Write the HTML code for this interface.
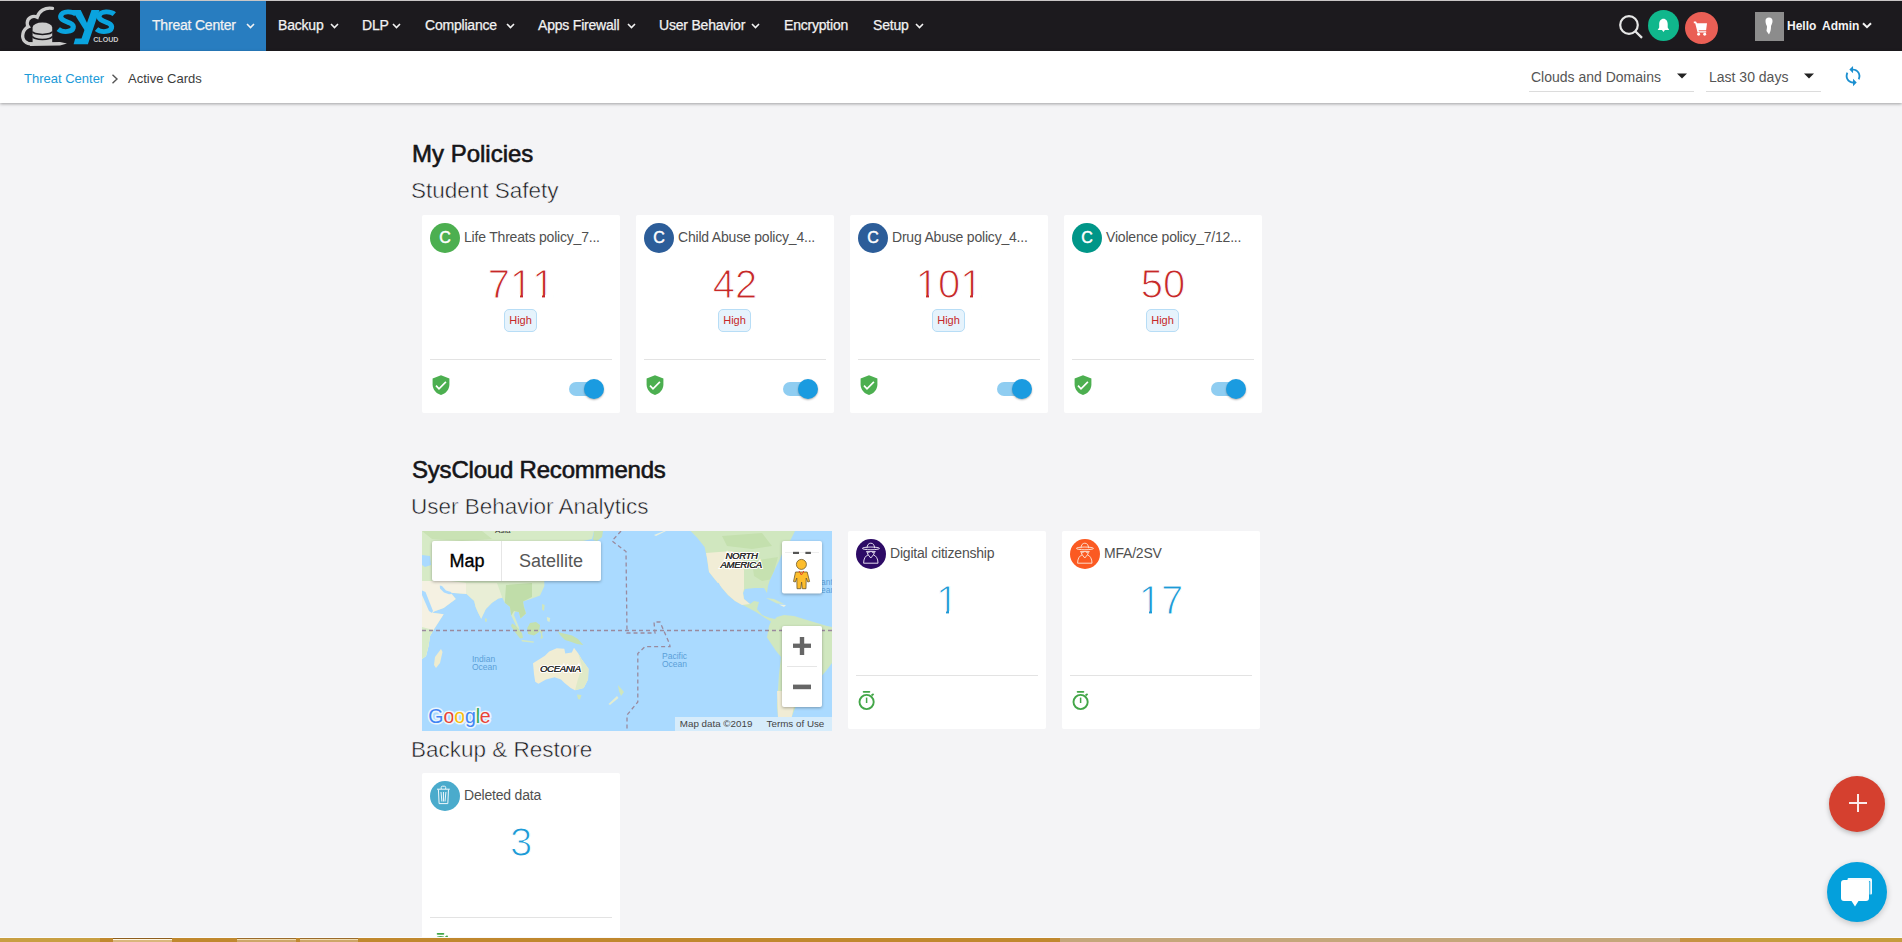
<!DOCTYPE html>
<html><head><meta charset="utf-8">
<style>
*{margin:0;padding:0;box-sizing:border-box}
html,body{width:1902px;height:942px;overflow:hidden;background:#f4f4f6;font-family:"Liberation Sans",sans-serif;position:relative}
.a{position:absolute;white-space:nowrap}
#topline{left:0;top:0;width:1902px;height:1px;background:#c9c6c6}
#nav{left:0;top:1px;width:1902px;height:50px;background:#1c1a1e}
#act{left:140px;top:1px;width:126px;height:50px;background:#287dc0}
.ni{font-size:14px;line-height:14px;color:#f2f2f2;top:18px;-webkit-text-stroke:0.25px #f2f2f2;letter-spacing:-0.2px}
.chev{position:absolute;top:23px}
#crumb{left:0;top:51px;width:1902px;height:52px;background:#fff;box-shadow:0 1px 3px rgba(0,0,0,.35)}
.bc{font-size:13px;line-height:13px;top:72px}
.dd{font-size:14px;line-height:14px;top:70px;color:#555}
.uline{height:1px;background:#dcdcdc;top:91px}
.h1{font-size:24px;line-height:24px;color:#151518;-webkit-text-stroke:0.6px #151518}
.h2{font-size:22.5px;line-height:22.5px;color:#18181c;-webkit-text-stroke:0.5px #f4f4f6}
.card{position:absolute;width:198px;height:198px;background:#fff;border-radius:2px}
.card .ic{position:absolute;left:8px;top:8px;width:30px;height:30px;border-radius:50%;color:#fff;font-size:16px;line-height:30px;text-align:center;-webkit-text-stroke:0.45px #fff}
.card .tt{position:absolute;left:42px;top:15px;font-size:14px;line-height:14px;color:#505050;white-space:nowrap;letter-spacing:-0.2px}
.card .num{position:absolute;left:0;width:198px;text-align:center;top:49px;font-size:40px;line-height:40px}
.card .red{color:#c62828;-webkit-text-stroke:1.1px #fff}
.card .blue{color:#1d9ad6;-webkit-text-stroke:1.1px #fff}
.card .badge{position:absolute;left:82px;top:94px;width:33px;height:22.5px;border:1px solid #b7ddf6;background:#e6f3fc;border-radius:5px;color:#c62828;font-size:11px;line-height:20px;text-align:center}
.card .div{position:absolute;left:8px;top:144px;width:182px;height:1px;background:#e3e3e3}
.card .sh{position:absolute;left:9.5px;top:160px}
.card .tg{position:absolute;left:147px;top:167px;width:33px;height:14px;border-radius:7px;background:#8fcdf1}
.card .th{position:absolute;left:162px;top:164px;width:20px;height:20px;border-radius:50%;background:#1a9be0;box-shadow:0 1px 2px rgba(0,0,0,.3)}
.card .tm{position:absolute;left:9px;top:159px}
.one{position:relative;display:inline-block}
.one::before,.one::after{content:"";position:absolute;top:31px;height:3px;width:8px;background:#fff}
.one::before{left:2px}.one::after{left:13px}
</style></head><body>
<div class="a" id="topline"></div>
<div class="a" id="nav"></div>
<div class="a" id="act"></div>

<!-- logo -->
<svg class="a" style="left:0;top:0" width="130" height="51" viewBox="0 0 130 51">
  <path d="M52.5 8.4 C45 7.2 39 10.8 37.2 17.2 C33 15.2 27.5 17.5 27.2 22.8 C27.1 24.5 27.6 25.8 28.4 26.8 C22.5 29.5 21 37.5 24.8 41.3 C26.5 43 29.5 44 33 44" fill="none" stroke="#cbcbcb" stroke-width="3.3" stroke-linecap="round"/>
  <path d="M30 42.4 L60 42 L67 43.4 L60 45.6 L30 46Z" fill="#cbcbcb"/>
  <path d="M32.6 27.4 A9.8 4.8 0 0 1 52.2 27.4 L52.2 43.5 L32.6 43.5Z" fill="#cbcbcb"/>
  <path d="M32.6 31.6 A9.8 2.8 0 0 0 52.2 31.6" fill="none" stroke="#1c1a1e" stroke-width="1.5"/>
  <path d="M32.6 36.2 A9.8 3.3 0 0 0 52.2 36.2" fill="none" stroke="#1c1a1e" stroke-width="1.5"/>
  <g fill="none" stroke="#0aa3de" stroke-width="5.1" stroke-linecap="butt" transform="matrix(1,0,0,0.94,0,1.3)">
    <path d="M76 13.6 C72.5 10.6 62.5 9.8 60.8 15.3 C59.6 19.8 66.5 21.3 70.2 23.3 C75 25.8 74.3 31.2 67.5 32.1 C63.5 32.6 60.5 31.6 58.2 29.6"/>
    <path d="M114.3 13.6 C110.8 10.6 100.8 9.8 99.1 15.3 C97.9 19.8 104.8 21.3 108.5 23.3 C113.3 25.8 112.6 31.2 105.8 32.1 C101.8 32.6 98.8 31.6 96.5 29.6"/>
  </g>
  <path d="M71.8 10 L80.7 10 L87.8 24.5 L84.8 30.5Z" fill="#0aa3de"/>
  <path d="M91.5 10 L99.5 10 L87.9 44.3 L73.6 44.3 L75.2 38.5 L81.5 38.5Z" fill="#0aa3de"/>
  <text x="93.2" y="42.2" font-family="Liberation Sans" font-weight="bold" font-size="7.1" fill="#c8c8c8">CLOUD</text>
</svg>

<div class="a ni" style="left:152px">Threat Center</div>
<div class="a ni" style="left:278px">Backup</div>
<div class="a ni" style="left:362px">DLP</div>
<div class="a ni" style="left:425px">Compliance</div>
<div class="a ni" style="left:538px">Apps Firewall</div>
<div class="a ni" style="left:659px">User Behavior</div>
<div class="a ni" style="left:784px">Encryption</div>
<div class="a ni" style="left:873px">Setup</div>
<svg class="chev" style="left:246px" width="9" height="6" viewBox="0 0 9 6"><path d="M1 1 L4.5 4.5 L8 1" fill="none" stroke="#f2f2f2" stroke-width="1.6"/></svg>
<svg class="chev" style="left:330px" width="9" height="6" viewBox="0 0 9 6"><path d="M1 1 L4.5 4.5 L8 1" fill="none" stroke="#f2f2f2" stroke-width="1.6"/></svg>
<svg class="chev" style="left:392px" width="9" height="6" viewBox="0 0 9 6"><path d="M1 1 L4.5 4.5 L8 1" fill="none" stroke="#f2f2f2" stroke-width="1.6"/></svg>
<svg class="chev" style="left:506px" width="9" height="6" viewBox="0 0 9 6"><path d="M1 1 L4.5 4.5 L8 1" fill="none" stroke="#f2f2f2" stroke-width="1.6"/></svg>
<svg class="chev" style="left:627px" width="9" height="6" viewBox="0 0 9 6"><path d="M1 1 L4.5 4.5 L8 1" fill="none" stroke="#f2f2f2" stroke-width="1.6"/></svg>
<svg class="chev" style="left:751px" width="9" height="6" viewBox="0 0 9 6"><path d="M1 1 L4.5 4.5 L8 1" fill="none" stroke="#f2f2f2" stroke-width="1.6"/></svg>
<svg class="chev" style="left:915px" width="9" height="6" viewBox="0 0 9 6"><path d="M1 1 L4.5 4.5 L8 1" fill="none" stroke="#f2f2f2" stroke-width="1.6"/></svg>

<!-- right nav -->
<svg class="a" style="left:1616px;top:12px" width="30" height="30" viewBox="0 0 30 30">
  <circle cx="13" cy="13" r="8.8" fill="none" stroke="#e6e6e6" stroke-width="2.2"/>
  <path d="M19.5 19.5 L26 25.8" stroke="#e6e6e6" stroke-width="2.4"/>
</svg>
<div class="a" style="left:1648px;top:10px;width:31px;height:31px;border-radius:50%;background:#10b78c"></div>
<svg class="a" style="left:1656px;top:18px" width="15" height="16" viewBox="0 0 15 16">
  <path d="M7.45 0.8 C4.9 0.8 3.2 3.2 3.2 6 L3.2 9.6 L1.7 11.9 L13.2 11.9 L11.7 9.6 L11.7 6 C11.7 3.2 10 0.8 7.45 0.8Z M5.6 11.6 L7.45 13.9 L9.3 11.6Z" fill="#fff"/>
</svg>
<div class="a" style="left:1685px;top:12px;width:33px;height:32px;border-radius:50%;background:#ea5f55"></div>
<svg class="a" style="left:1693px;top:21px" width="16" height="16" viewBox="0 0 16 16">
  <path d="M0.8 0.6 L3 0.6 L4 2.3 L14 2.3 L13.1 9.3 L5.6 9.3 L5.9 10.2 L13.2 10.2 L13.2 11.6 L4.6 11.6 L2.2 2.2 L0.8 2.2Z" fill="#fff"/>
  <circle cx="5.6" cy="13.2" r="1.45" fill="#fff"/><circle cx="11.7" cy="13.2" r="1.45" fill="#fff"/>
</svg>
<div class="a" style="left:1755px;top:12px;width:29px;height:29px;background:#8c8c8c"></div>
<svg class="a" style="left:1763px;top:17px" width="12" height="20" viewBox="0 0 12 20">
  <path d="M6 0.5 C3.5 0.5 2.5 2 2.5 4 C2.5 6.5 3.5 8 4 9.5 C4 11 3.5 13 3.5 14 L6 17.5 L7.5 14 C8 12 8 10 8 9 C9 7 9.5 5.5 9.5 4 C9.5 2 8.5 0.5 6 0.5Z" fill="#fff"/>
</svg>
<div class="a" style="left:1787px;top:20px;font-size:12px;line-height:12px;font-weight:bold;color:#f4f4f4">Hello</div><div class="a" style="left:1822px;top:20px;font-size:12px;line-height:12px;font-weight:bold;color:#f4f4f4">Admin</div>
<svg class="a" style="left:1862px;top:22px" width="10" height="7" viewBox="0 0 10 7"><path d="M1 1.2 L5 5.2 L9 1.2" fill="none" stroke="#f4f4f4" stroke-width="2"/></svg>

<!-- breadcrumb bar -->
<div class="a" id="crumb"></div>
<div class="a bc" style="left:24px;color:#1a9ad8">Threat Center</div>
<svg class="a" style="left:111px;top:74px" width="8" height="10" viewBox="0 0 8 10"><path d="M1.5 0.8 L6 5 L1.5 9.2" fill="none" stroke="#555" stroke-width="1.4"/></svg>
<div class="a bc" style="left:128px;color:#3c3c3c">Active Cards</div>

<div class="a dd" style="left:1531px">Clouds and Domains</div>
<svg class="a" style="left:1677px;top:73px" width="10" height="6" viewBox="0 0 10 6"><path d="M0 0.5 L10 0.5 L5 5.5Z" fill="#222"/></svg>
<div class="a uline" style="left:1529px;width:165px"></div>
<div class="a dd" style="left:1709px">Last 30 days</div>
<svg class="a" style="left:1804px;top:73px" width="10" height="6" viewBox="0 0 10 6"><path d="M0 0.5 L10 0.5 L5 5.5Z" fill="#222"/></svg>
<div class="a uline" style="left:1706px;width:115px"></div>
<svg class="a" style="left:1841.6px;top:65px" width="22" height="22" viewBox="0 0 22 22">
  <g transform="scale(0.92)"><path d="M12 4V1L8 5l4 4V6c3.31 0 6 2.69 6 6 0 1.010-.25 1.97-.7 2.8l1.46 1.46C19.54 15.030 20 13.570 20 12c0-4.42-3.58-8-8-8zm0 14c-3.31 0-6-2.69-6-6 0-1.01.25-1.97.7-2.8L5.24 7.740C4.46 8.970 4 10.430 4 12c0 4.42 3.58 8 8 8v3l4-4-4-4v3z" fill="#1b8fd0"/></g>
</svg>

<!-- My Policies -->
<div class="a h1" style="left:412px;top:142px">My Policies</div>
<div class="a h2" style="left:411px;top:179.6px">Student Safety</div>

<div class="card" style="left:422px;top:215px">
  <div class="ic" style="background:#4caf50">C</div>
  <div class="tt">Life Threats policy_7...</div>
  <div class="num red">7<span class="one">1</span><span class="one">1</span></div>
  <div class="badge">High</div>
  <div class="div"></div>
  <svg class="sh" width="18" height="21" viewBox="0 0 18 21"><path d="M9 0.3 L17.4 3.6 L17.4 9.5 C17.4 14.5 13.8 18.6 9 20 C4.2 18.6 0.6 14.5 0.6 9.5 L0.6 3.6Z" fill="#4caf50"/><path d="M4 10.7 L7 13.8 L13.9 6.9" fill="none" stroke="#fff" stroke-width="1.7"/></svg>
  <div class="tg"></div><div class="th"></div>
</div>
<div class="card" style="left:636px;top:215px">
  <div class="ic" style="background:#2c5d99">C</div>
  <div class="tt">Child Abuse policy_4...</div>
  <div class="num red">42</div>
  <div class="badge">High</div>
  <div class="div"></div>
  <svg class="sh" width="18" height="21" viewBox="0 0 18 21"><path d="M9 0.3 L17.4 3.6 L17.4 9.5 C17.4 14.5 13.8 18.6 9 20 C4.2 18.6 0.6 14.5 0.6 9.5 L0.6 3.6Z" fill="#4caf50"/><path d="M4 10.7 L7 13.8 L13.9 6.9" fill="none" stroke="#fff" stroke-width="1.7"/></svg>
  <div class="tg"></div><div class="th"></div>
</div>
<div class="card" style="left:850px;top:215px">
  <div class="ic" style="background:#2c5d99">C</div>
  <div class="tt">Drug Abuse policy_4...</div>
  <div class="num red"><span class="one">1</span>0<span class="one">1</span></div>
  <div class="badge">High</div>
  <div class="div"></div>
  <svg class="sh" width="18" height="21" viewBox="0 0 18 21"><path d="M9 0.3 L17.4 3.6 L17.4 9.5 C17.4 14.5 13.8 18.6 9 20 C4.2 18.6 0.6 14.5 0.6 9.5 L0.6 3.6Z" fill="#4caf50"/><path d="M4 10.7 L7 13.8 L13.9 6.9" fill="none" stroke="#fff" stroke-width="1.7"/></svg>
  <div class="tg"></div><div class="th"></div>
</div>
<div class="card" style="left:1064px;top:215px">
  <div class="ic" style="background:#009688">C</div>
  <div class="tt">Violence policy_7/12...</div>
  <div class="num red">50</div>
  <div class="badge">High</div>
  <div class="div"></div>
  <svg class="sh" width="18" height="21" viewBox="0 0 18 21"><path d="M9 0.3 L17.4 3.6 L17.4 9.5 C17.4 14.5 13.8 18.6 9 20 C4.2 18.6 0.6 14.5 0.6 9.5 L0.6 3.6Z" fill="#4caf50"/><path d="M4 10.7 L7 13.8 L13.9 6.9" fill="none" stroke="#fff" stroke-width="1.7"/></svg>
  <div class="tg"></div><div class="th"></div>
</div>

<!-- SysCloud Recommends -->
<div class="a h1" style="left:412px;top:458px;letter-spacing:-0.2px">SysCloud Recommends</div>
<div class="a h2" style="left:411px;top:496px">User Behavior Analytics</div>

<svg class="a" style="left:422px;top:531px" width="410" height="200" viewBox="0 0 410 200">
 <rect width="410" height="200" fill="#aadaff"/>
 <!-- Eurasia + Africa -->
 <path d="M0 0 L172 0 L170 8 L152 12 L150 50 L122.3 50 L122.3 55.3 L118 64.6 L108.7 68 L101 70.5 L101.9 75.7 L104 82.5 L98.5 87.6 L96.8 81 L93 80.5 L92 84 L97.5 97.7 L95.5 97.7 L92.4 91 L89.2 84.6 L87.9 75.7 L82.8 71.8 L80.3 66.8 L76.4 67.4 L70 71.8 L63.7 78.2 L59.2 87.8 L56 81.4 L53.5 75.7 L52.2 70 L44.6 63 L28.7 61.7 L33.8 68 L21.7 77 L12 80.5 L10.5 81.8 L21.7 83.3 L11.5 99 L8 105 L6.5 115 L4 125 L0 128 Z" fill="#d6eac6"/>
 <path d="M0 50 L28.7 50 L44.6 52 L44.6 63 L28.7 61.7 L33.8 68 L21.7 77 L12 80.5 L10.5 81.8 L21.7 83.3 L11.5 99 L8 105 L6.5 115 L4 125 L0 128 Z" fill="#f5f1e2"/>
 <path d="M44.6 52 L75 52 L80.3 66.8 L76.4 67.4 L70 71.8 L63.7 78.2 L59.2 87.8 L56 81.4 L53.5 75.7 L52.2 70 L44.6 63 Z" fill="#e9eed6"/>
 <path d="M0 0 L60 0 L70 8 L40 10 L10 8 Z" fill="#c9e2b4"/>
 <path d="M84 54 L110 52 L110 66 L101 70.5 L101.9 75.7 L104 82.5 L98.5 87.6 L96.8 81 L92 80 L89.2 84.6 L87.9 75.7 L82.8 71.8 Z" fill="#c0dda9"/>
 <path d="M0 96 L11.5 99 L8 105 L6.5 115 L4 125 L0 128 Z" fill="#d8ebc8"/>
 <!-- water bodies in Asia -->
 <path d="M0 24 L8 25 L9 34 L3 36 L0 34Z" fill="#aadaff"/>
 <path d="M0 59.5 L3.5 61 L11 80 L10 82 L7 80 L0 64Z" fill="#aadaff"/>
 <path d="M17.8 54.5 L20 55 L24 59.5 L29 61 L30 63 L27 63.2 L22 61.5 L18 57.5Z" fill="#aadaff"/>
 <!-- Japan etc -->
 <path d="M172 0 L181 0 L180 6 L175 10 L171 9Z" fill="#c9e3b4"/>
 <path d="M120.1 73 L122.7 74 L122 80 L120 78.5Z" fill="#cfe6bd"/>
 <path d="M124.8 86 L128.2 87 L127.5 91 L125.3 90Z" fill="#dceccd"/>
 <path d="M63 87 L65 88 L64.5 91 L63 90.5Z" fill="#cfe6bd"/>
 <!-- Indonesia -->
 <path d="M90 92.6 L94 95 L100 102 L101 107 L98 107.5 L93 101 L89 95Z" fill="#c8e2b2"/>
 <path d="M99.3 108.8 L112 110.5 L111.5 111.8 L100 110.5Z" fill="#d3e8c3"/>
 <path d="M108 92 L114 91 L118 94 L117 101 L112 104.5 L106 103 L105.3 97Z" fill="#c4e0ad"/>
 <path d="M117 99 L122 98.6 L120 102 L121 107 L118.5 108 L119 103Z" fill="#cde5b8"/>
 <path d="M135.9 101 L142 102.5 L150 104.5 L156 108 L161.3 113.9 L155 113 L148 110.5 L143 109 L138 104Z" fill="#c6e1b0"/>
 <!-- Australia -->
 <path d="M111 132.3 L122.9 124.8 L127.2 120.5 L134.7 117.2 L142.3 117.8 L143.3 122.6 L149.8 121.6 L152 116.7 L156.3 122.6 L159.5 128 L166.5 137.7 L166 148.5 L161.7 157 L153 159.3 L148.7 157 L142.3 151.7 L139 148.5 L132.6 146.3 L124 148.5 L116.4 152.8 L113.2 150.7 L112 143Z" fill="#f1edd3"/>
 <path d="M156.3 122.6 L159.5 128 L166.5 137.7 L166 148.5 L161.7 157 L153 159.3 L156 148 L160 136Z" fill="#dfeac8"/>
 <path d="M155 163.6 L159.5 164 L158 168.4 L156 168Z" fill="#cfe6bd"/>
 <path d="M196 154 L202 161 L199 165 L197 160Z" fill="#cfe6bd"/>
 <path d="M195 165 L196.5 167 L188 174 L186.5 173Z" fill="#e3ecd0"/>
 <path d="M19 118 L20.5 121 L18 132 L14 137 L12 134 L13 126Z" fill="#eeeccf"/>
 <!-- Americas -->
 <path d="M268.6 0 L373 0 L368 10 L362 18 L358 28 L352 40 L348 48.5 L346 55 L345 62 L342 57 L333 57 L323 58 L321 62 L322 68 L328 73 L332 70 L337 71 L335 78 L340 84 L348 87 L353 88 L355 86 L362 84 L372 85 L385 89 L395 92 L405 95 L410 96 L410 132 L404 140 L395 150 L385 160 L375 172 L370 185 L366 197 L362 200 L358 200 L356 186 L355 175 L357 143 L359 126 L353.7 119.4 L345 106.5 L347 95 L349 90.5 L343 87 L334 81 L323.6 75.4 L313 70 L306 64 L300 57 L293 48.5 L287 41 L285 27 L282.6 16 L275 6.5Z" fill="#d0e7bf"/>
 <path d="M284 22 L310 20 L322 30 L322 58 L321 62 L322 68 L328 73 L320 74 L313 70 L306 64 L300 57 L293 48.5 L287 41 L285 27Z" fill="#f1edd6"/>
 <path d="M300 5 L340 2 L350 15 L330 18 L305 15Z" fill="#c4e0ae"/>
 <path d="M330 30 L356 26 L352 40 L348 48.5 L340 50 L332 45Z" fill="#c6e1b0"/>
 <path d="M355 160 L375 160 L370 185 L366 197 L358 200 L356 186Z" fill="#f0ecd5"/>
 <path d="M296 52 L302 64" stroke="#aadaff" stroke-width="1.4"/>
 <path d="M344 67 L352 68 L362 73 L355 72.5Z" fill="#d3e8c3"/>
 <path d="M357 73.5 L364 74 L362 76Z" fill="#eef2e0"/>
 <path d="M232 4 L242 0 L244 0 L234 5Z" fill="#eaf1e0"/>
 <path d="M380 0 L410 0 L410 6 L392 12 L376 8Z" fill="#aadaff"/>
 <!-- dashed lines -->
 <g fill="none" stroke="#9a8a9e" stroke-width="1.3" stroke-dasharray="4 3">
  <path d="M0 99.5 L410 99.5"/>
  <path d="M199 0 L190 10 L204 20.5 L205 102 L233 102 L232 91 L238 91 L247.6 113 L248 115.6 L223 115.6 L215.8 122.6 L215.8 171 L205 184 L205 200"/>
 </g>
 <!-- labels -->
 <g font-family="Liberation Sans" font-style="italic" font-size="9.6" fill="#2a2a2a" stroke="#fff" stroke-width="2.2" paint-order="stroke" letter-spacing="-0.35">
  <text x="303.5" y="27.6">NORTH</text>
  <text x="298.5" y="36.6">AMERICA</text>
  <text x="118" y="141.2">OCEANIA</text>
 </g>
 <g font-family="Liberation Sans" font-style="italic" font-size="9.6" fill="#2a2a2a" stroke="#2a2a2a" stroke-width="0.12" letter-spacing="-0.35">
  <text x="303.5" y="27.6">NORTH</text>
  <text x="298.5" y="36.6">AMERICA</text>
  <text x="118" y="141.2">OCEANIA</text>
 </g>
 <g font-family="Liberation Sans" font-size="8.5" fill="#5a9fd8">
  <text x="50" y="131">Indian</text>
  <text x="50" y="139">Ocean</text>
  <text x="240" y="128">Pacific</text>
  <text x="240" y="136">Ocean</text>
  <text x="399" y="54">ant</text>
  <text x="399" y="62">ean</text>
 </g>
 <text x="73" y="2" font-family="Liberation Sans" font-size="8" fill="#333">Asia</text>
 <!-- Map / Satellite control -->
 <rect x="10" y="10" width="169" height="40" rx="2" fill="#fff" style="filter:drop-shadow(0 1px 1.5px rgba(0,0,0,.3))"/>
 <rect x="79" y="10" width="1" height="40" fill="#e6e6e6"/>
 <text x="27.5" y="35.6" font-family="Liberation Sans" font-size="18" fill="#000" stroke="#000" stroke-width="0.35">Map</text>
 <text x="97" y="35.6" font-family="Liberation Sans" font-size="18" fill="#565656">Satellite</text>
 <!-- pegman box -->
 <rect x="360" y="10" width="40" height="52.6" rx="2" fill="#fff" style="filter:drop-shadow(0 1px 1.5px rgba(0,0,0,.3))"/>
 <rect x="363" y="21" width="34" height="1" fill="#eee"/>
 <rect x="371" y="20.8" width="6" height="2.2" fill="#555"/>
 <rect x="383.4" y="20.8" width="5.5" height="2.2" fill="#555"/>
 <g fill="#fdbd2c" stroke="#6d5a2c" stroke-width="0.8">
  <circle cx="379.4" cy="33.4" r="5"/>
  <path d="M373.5 41 L385.2 41 L387.6 50.5 L385.8 51 L384.2 47 L384 57.7 L380.3 57.7 L379.6 51 L378.8 57.7 L375 57.7 L374.8 47 L373.3 51 L371.5 50.5Z"/>
 </g>
 <path d="M377 40 L379.4 44 L381.8 40" stroke="#e4452d" stroke-width="1" fill="none"/>
 <!-- zoom box -->
 <rect x="360" y="95" width="40" height="81" rx="2" fill="#fff" style="filter:drop-shadow(0 1px 1.5px rgba(0,0,0,.3))"/>
 <rect x="365" y="135" width="30" height="1" fill="#e6e6e6"/>
 <rect x="371" y="112.6" width="18" height="4.3" fill="#666"/>
 <rect x="377.8" y="106" width="4.4" height="18" fill="#666"/>
 <rect x="371" y="153.6" width="18" height="4.6" fill="#666"/>
 <!-- attribution -->
 <rect x="253" y="186" width="157" height="14" fill="#d6ecfb"/>
 <text x="257.8" y="196" font-family="Liberation Sans" font-size="9.8" fill="#444">Map data ©2019</text>
 <text x="344.6" y="196" font-family="Liberation Sans" font-size="9.8" fill="#444">Terms of Use</text>
 <!-- google logo -->
 <g font-family="Liberation Sans" font-size="19.5" stroke="#eaf5fd" stroke-width="3.2" paint-order="stroke" stroke-linejoin="round">
  <text x="6.3" y="191.5" letter-spacing="-0.1"><tspan fill="#4285f4">G</tspan><tspan fill="#ea4335">o</tspan><tspan fill="#fbbc05">o</tspan><tspan fill="#4285f4">g</tspan><tspan fill="#34a853">l</tspan><tspan fill="#ea4335">e</tspan></text>
 </g>
</svg>


<div class="card" style="left:848px;top:531px">
  <div class="ic" style="background:#2d0b66"><svg width="30" height="30" viewBox="0 0 30 30" style="position:absolute;left:0;top:0" fill="none" stroke="#ece6f4" stroke-width="0.95"><path d="M11 9.2 C11.1 5.8 12.6 4.2 14.8 4.2 C17 4.2 18.5 5.8 18.6 9.2"/><ellipse cx="14.9" cy="9.4" rx="8.6" ry="1.35"/><path d="M10.2 12.6 L19.6 12.6 M11 12.8 C11.5 14 13 14 13.8 12.8 M15.8 12.8 C16.6 14 18.1 14 18.6 12.8"/><path d="M7.6 24.2 C7.6 19.5 9.5 16.8 12.2 15.8 L14.8 19 L17.4 15.8 C20.1 16.8 22 19.5 22 24.2 Z"/><path d="M12.2 15.8 L11 13.4 M17.4 15.8 L18.6 13.4"/></svg></div>
  <div class="tt">Digital citizenship</div>
  <div class="num blue"><span class="one">1</span></div>
  <div class="div"></div>
  <svg class="tm" width="20" height="22" viewBox="0 0 20 22"><circle cx="9.6" cy="12" r="7.1" fill="none" stroke="#43a648" stroke-width="1.9"/><path d="M6.6 1.85 L12.4 1.85" stroke="#43a648" stroke-width="1.8" stroke-linecap="round"/><path d="M9.6 7.6 L9.6 13" stroke="#43a648" stroke-width="1.5"/><path d="M14.5 5.4 L16.6 3.9" stroke="#43a648" stroke-width="1.8"/></svg>
</div>
<div class="card" style="left:1062px;top:531px">
  <div class="ic" style="background:#fb5a22"><svg width="30" height="30" viewBox="0 0 30 30" style="position:absolute;left:0;top:0" fill="none" stroke="#fde2d2" stroke-width="0.95"><path d="M11 9.2 C11.1 5.8 12.6 4.2 14.8 4.2 C17 4.2 18.5 5.8 18.6 9.2"/><ellipse cx="14.9" cy="9.4" rx="8.6" ry="1.35"/><path d="M10.2 12.6 L19.6 12.6 M11 12.8 C11.5 14 13 14 13.8 12.8 M15.8 12.8 C16.6 14 18.1 14 18.6 12.8"/><path d="M7.6 24.2 C7.6 19.5 9.5 16.8 12.2 15.8 L14.8 19 L17.4 15.8 C20.1 16.8 22 19.5 22 24.2 Z"/><path d="M12.2 15.8 L11 13.4 M17.4 15.8 L18.6 13.4"/></svg></div>
  <div class="tt">MFA/2SV</div>
  <div class="num blue"><span class="one">1</span>7</div>
  <div class="div"></div>
  <svg class="tm" width="20" height="22" viewBox="0 0 20 22"><circle cx="9.6" cy="12" r="7.1" fill="none" stroke="#43a648" stroke-width="1.9"/><path d="M6.6 1.85 L12.4 1.85" stroke="#43a648" stroke-width="1.8" stroke-linecap="round"/><path d="M9.6 7.6 L9.6 13" stroke="#43a648" stroke-width="1.5"/><path d="M14.5 5.4 L16.6 3.9" stroke="#43a648" stroke-width="1.8"/></svg>
</div>

<div class="a h2" style="left:411px;top:739px">Backup &amp; Restore</div>
<div class="card" style="left:422px;top:773px">
  <div class="ic" style="background:#4aabcc"><svg width="30" height="30" viewBox="0 0 30 30" style="position:absolute;left:0;top:0" fill="none" stroke="#eef8fc" stroke-width="1"><path d="M7 8.2 L19.8 8.2"/><path d="M11.2 8 L11.2 6.5 C11.2 5.6 11.7 5.2 12.5 5.2 L14.4 5.2 C15.2 5.2 15.7 5.6 15.7 6.5 L15.7 8"/><path d="M8.4 8.5 L9.1 22.6 L17.8 22.6 L18.5 8.5"/><path d="M11 11 L11.9 20.5 M13.45 11 L13.45 20.5 M15.9 11 L15 20.5"/></svg></div>
  <div class="tt">Deleted data</div>
  <div class="num blue">3</div>
  <div class="div"></div>
  <svg class="tm" width="20" height="22" viewBox="0 0 20 22"><circle cx="9.6" cy="12" r="7.1" fill="none" stroke="#43a648" stroke-width="1.9"/><path d="M6.6 1.85 L12.4 1.85" stroke="#43a648" stroke-width="1.8" stroke-linecap="round"/><path d="M9.6 7.6 L9.6 13" stroke="#43a648" stroke-width="1.5"/><path d="M14.5 5.4 L16.6 3.9" stroke="#43a648" stroke-width="1.8"/></svg>
</div>

<!-- FABs -->
<div class="a" style="left:1829px;top:776px;width:56px;height:56px;border-radius:50%;background:#d5402f;box-shadow:0 2px 5px rgba(0,0,0,.25)"></div>
<div class="a" style="left:1849px;top:802px;width:18px;height:2px;background:#fbeaea"></div>
<div class="a" style="left:1857px;top:794px;width:2px;height:18px;background:#fbeaea"></div>
<div class="a" style="left:1827px;top:862px;width:60px;height:60px;border-radius:50%;background:#04a0dc;box-shadow:0 2px 6px rgba(0,0,0,.2)"></div>

<svg class="a" style="left:1838px;top:872px" width="40" height="40" viewBox="0 0 40 40">
  <path d="M11 6 C10 6 9.5 6.5 9.5 7.5 L9.5 9 L28 9 C30 9 31 10 31 12 L31 22.5 L32.5 22.5 C33.5 22.5 34 22 34 21 L34 8 C34 6.8 33.2 6 32 6Z" fill="#fff" opacity="0.95"/>
  <path d="M6 8 L28 8 C30 8 31 9 31 11 L31 26 C31 28 30 29 28 29 L20.5 29 L17 34.5 L13.5 29 L6 29 C4 29 3 28 3 26 L3 11 C3 9 4 8 6 8Z" fill="#fff"/>
  <path d="M31 9.5 L31.8 9.5 L31.8 24" stroke="#04a0dc" stroke-width="0.9" fill="none"/>
</svg>
<!-- bottom taskbar strip -->
<div class="a" style="left:0;top:937px;width:1902px;height:1px;background:#fbfbfc"></div>
<div class="a" style="left:0;top:938px;width:1902px;height:4px;background:#c0882e"></div>
<div class="a" style="left:0;top:938px;width:100px;height:4px;background:#c89f42"></div>
<div class="a" style="left:113px;top:938px;width:59px;height:4px;background:#d9b67c;border-top:1px solid #8d5d1e;box-shadow:inset 0 1px 0 #fff6e0"></div>
<div class="a" style="left:237px;top:938px;width:59px;height:4px;background:#cda668;border-top:1px solid #9a6a2a;box-shadow:inset 0 1px 0 #f0dcb0"></div>
<div class="a" style="left:300px;top:938px;width:58px;height:4px;background:#cda668;border-top:1px solid #9a6a2a;box-shadow:inset 0 1px 0 #f0dcb0"></div>
<div class="a" style="left:1060px;top:938px;width:620px;height:4px;background:#c4a67a"></div>
<div class="a" style="left:1680px;top:938px;width:50px;height:4px;background:#c69242"></div>
<div class="a" style="left:1730px;top:938px;width:172px;height:4px;background:#c59c3d"></div>
</body></html>
